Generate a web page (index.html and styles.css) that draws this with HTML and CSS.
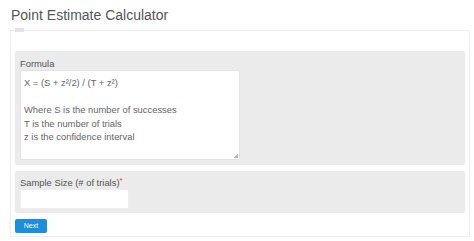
FILE: index.html
```html
<!DOCTYPE html>
<html>
<head>
<meta charset="utf-8">
<link rel="stylesheet" href="styles.css">
</head>
<body>
<h1 class="title">Point Estimate Calculator</h1>
<div class="card">
  <span class="tab"></span>
  <div class="group">
    <label class="label">Formula</label>
    <div class="textarea">X = (S + z²/2) / (T + z²)<br><br>Where S is the number of successes<br>T is the number of trials<br>z is the confidence interval<span class="grip"></span></div>
  </div>
  <div class="group group-sample">
    <label class="label">Sample Size (# of trials)<sup class="req">*</sup></label>
    <div class="input"></div>
  </div>
  <button class="btn">Next</button>
</div>
</body>
</html>
```
FILE: styles.css
```css
html, body {
  margin: 0;
  padding: 0;
  background: #fff;
  font-family: "Liberation Sans", Arial, sans-serif;
}
.title {
  margin: 0;
  padding: 7px 0 0 11px;
  height: 23px;
  box-sizing: border-box;
  font-size: 14px;
  line-height: 16px;
  font-weight: normal;
  color: #555;
}
.card {
  position: relative;
  margin: 7px 0 0 10px;
  width: 460px;
  box-sizing: border-box;
  border: 1px solid #eeeeee;
  padding: 20px 4px 3px 4px;
}
.tab {
  position: absolute;
  left: 4px;
  top: -3px;
  width: 9px;
  height: 4px;
  background: #e2e2e2;
}
.group {
  background: #ebebeb;
  padding: 6px 5px 5px 5px;
  border-radius: 2px;
}
.group-sample {
  margin-top: 6px;
  padding: 5px 5px 4px 5px;
}
.label {
  display: block;
  font-size: 9.4px;
  line-height: 13px;
  color: #555;
}
.req {
  color: #e0403a;
  font-size: 8px;
  line-height: 0;
  vertical-align: 3px;
}
.textarea {
  position: relative;
  width: 220px;
  height: 90px;
  box-sizing: border-box;
  background: #fff;
  border: 1px solid #e4e4e4;
  border-radius: 2px;
  padding: 5px 3px;
  font-size: 9.4px;
  line-height: 13.5px;
  color: #666;
}
.grip {
  position: absolute;
  right: 1px;
  bottom: 1px;
  width: 4px;
  height: 4px;
  background: linear-gradient(135deg, transparent 50%, #b8b8b8 50%);
}
.input {
  width: 109px;
  height: 20px;
  box-sizing: border-box;
  background: #fff;
  border: 1px solid #eee;
  border-radius: 2px;
}
.btn {
  display: block;
  margin-top: 6px;
  width: 32px;
  height: 14px;
  padding: 0;
  border: none;
  border-radius: 2px;
  background: #1b8fdb;
  color: #fff;
  font-family: "Liberation Sans", Arial, sans-serif;
  font-size: 7px;
  line-height: 14px;
  text-align: center;
}
```
